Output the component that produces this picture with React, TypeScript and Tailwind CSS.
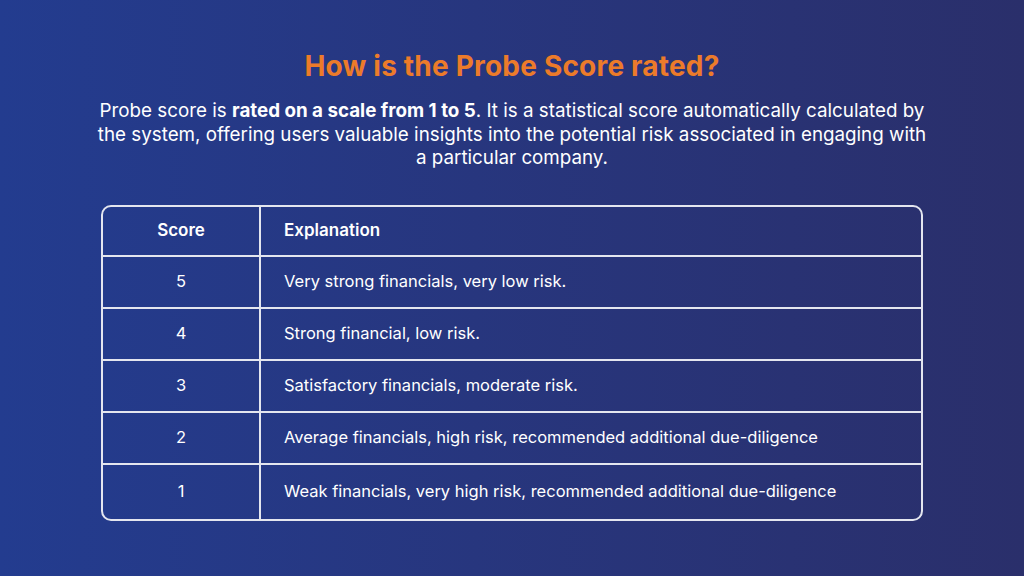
export default function App() {
  const rows = [
    { score: "5", text: "Very strong financials, very low risk." },
    { score: "4", text: "Strong financial, low risk." },
    { score: "3", text: "Satisfactory financials, moderate risk." },
    { score: "2", text: "Average financials, high risk, recommended additional due-diligence" },
    { score: "1", text: "Weak financials, very high risk, recommended additional due-diligence" },
  ];

  return (
    <div
      className="flex h-[576px] w-[1024px] flex-col items-center bg-gradient-to-r from-[#233c8f] to-[#2a2f6b] pt-[47px] text-white"
      style={{ fontFamily: "Inter, 'Noto Sans', sans-serif" }}
    >
      <h1 className="text-[28px] font-bold leading-[38px] tracking-[0.2px] text-[#ec7b2a]">How is the Probe Score rated?</h1>
      <p className="mt-[14px] w-[834px] text-center text-[18.8px] leading-[23.5px] text-white">
        Probe score is <span className="font-bold">rated on a scale from 1 to 5</span>. It is a statistical score
        automatically calculated by the system, offering users valuable insights into the potential risk associated in
        engaging with a particular company.
      </p>

      <div className="mt-[35px] w-[822px] overflow-hidden rounded-[10px] border-2 border-[#e4e6ef]">
        <div className="flex h-[50px] items-center border-b-2 border-[#e4e6ef] text-[17px] font-semibold">
          <div className="flex h-full w-[158px] items-center justify-center border-r-2 border-[#e4e6ef]">Score</div>
          <div className="pl-[23px]">Explanation</div>
        </div>
        {rows.map((row, i) => (
          <div
            key={row.score}
            className={`flex items-center text-[16.5px] ${i < rows.length - 1 ? "h-[52px] border-b-2 border-[#e4e6ef]" : "h-[54px]"}`}
          >
            <div className="flex h-full w-[158px] items-center justify-center border-r-2 border-[#e4e6ef]">{row.score}</div>
            <div className="pl-[23px]">{row.text}</div>
          </div>
        ))}
      </div>
    </div>
  );
}
